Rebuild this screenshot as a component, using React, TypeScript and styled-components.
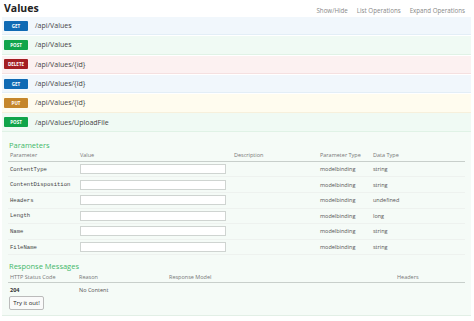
import React from "react";
import styled, { createGlobalStyle } from "styled-components";

const Global = createGlobalStyle`
  html, body { margin: 0; padding: 0; background: #fff; }
  body { font-family: "Open Sans", "Noto Sans", sans-serif; color: #333; }
`;

const Page = styled.div`
  width: 474px;
  height: 321px;
  overflow: hidden;
  padding: 0 3px 0 2px;
  box-sizing: border-box;
`;

const Header = styled.div`
  display: flex;
  justify-content: space-between;
  align-items: center;
  height: 17px;
  padding: 0 6px 0 2px;
`;

const Title = styled.h2`
  margin: 0;
  font-size: 10.5px;
  font-weight: 700;
  color: #222;
  line-height: 1;
`;

const Links = styled.div`
  display: flex;
  gap: 9px;
  font-size: 6.2px;
  color: #888;
  margin-top: 3px;
`;

const Ops = styled.div`
  display: flex;
  flex-direction: column;
  gap: 0.9px;
`;

const palette: Record<string, { badge: string; bg: string; line: string }> = {
  GET: { badge: "#0f6ab4", bg: "#f1f7fc", line: "#e3eef7" },
  POST: { badge: "#10a54a", bg: "#f0faf4", line: "#e0f2e6" },
  DELETE: { badge: "#a41e22", bg: "#fcf1f1", line: "#f5e0e0" },
  PUT: { badge: "#c5862b", bg: "#fffcef", line: "#f7f0dc" },
};

const OpRow = styled.div<{ $m: string }>`
  display: flex;
  align-items: center;
  height: 18.4px;
  padding-left: 2px;
  background: ${(p) => palette[p.$m].bg};
  border-bottom: 1px solid ${(p) => palette[p.$m].line};
  box-sizing: border-box;
`;

const Badge = styled.span<{ $m: string }>`
  width: 24px;
  height: 10px;
  display: flex;
  align-items: center;
  justify-content: center;
  background: ${(p) => palette[p.$m].badge};
  color: #fff;
  font-size: 4.5px;
  font-weight: 700;
  border-radius: 1px;
`;

const Path = styled.span`
  margin-left: 7px;
  font-size: 7px;
  color: #444;
`;

const Expanded = styled.div`
  background: #f5fbf7;
  border-bottom: 1px solid #e2efe6;
  padding: 8px 6px 5px 6px;
  height: 184px;
  box-sizing: border-box;
  font-size: 6px;
`;

const SectionTitle = styled.div`
  font-size: 7.5px;
  color: #43b86a;
  height: 10px;
  line-height: 10px;
  margin-left: 1px;
`;

const Grid = styled.div<{ $cols: string }>`
  display: grid;
  grid-template-columns: ${(p) => p.$cols};
  align-items: center;
`;

const HeadRow = styled(Grid)`
  height: 11px;
  border-bottom: 1px solid #c8cfcb;
  font-size: 5.5px;
  color: #777;
  padding-left: 2px;
`;

const ParamRow = styled(Grid)`
  height: 15.6px;
  border-bottom: 1px solid #eef2ef;
  font-size: 5.5px;
  color: #555;
  padding-left: 2px;
  box-sizing: border-box;
`;

const Mono = styled.span`
  font-family: "Liberation Mono", "DejaVu Sans Mono", monospace;
  font-size: 5.6px;
  color: #444;
`;

const Input = styled.div`
  width: 146px;
  height: 10px;
  background: #fff;
  border: 1px solid #cfd4d1;
  box-sizing: border-box;
`;

const Cell = styled.span`
  font-size: 5.5px;
  color: #555;
`;

const RespTitle = styled(SectionTitle)`
  margin-top: 6px;
`;

const DataRow = styled(Grid)`
  height: 13px;
  font-size: 5.5px;
  color: #555;
  padding-left: 2px;
`;

const Bold = styled.span`
  font-weight: 700;
  color: #333;
`;

const Button = styled.button`
  display: block;
  margin: 0 0 0 1px;
  width: 35px;
  height: 14px;
  font-family: "Open Sans", sans-serif;
  font-size: 6px;
  color: #222;
  background: #fafafa;
  border: 1px solid #bbb;
  border-radius: 2px;
  padding: 0;
`;

const ops: [string, string][] = [
  ["GET", "/api/Values"],
  ["POST", "/api/Values"],
  ["DELETE", "/api/Values/{id}"],
  ["GET", "/api/Values/{id}"],
  ["PUT", "/api/Values/{id}"],
  ["POST", "/api/Values/UploadFile"],
];

const params: [string, string][] = [
  ["ContentType", "string"],
  ["ContentDisposition", "string"],
  ["Headers", "undefined"],
  ["Length", "long"],
  ["Name", "string"],
  ["FileName", "string"],
];

const paramCols = "70px 154px 86px 53px 1fr";
const respCols = "69px 90px 228px 1fr";

export default function App() {
  return (
    <Page>
      <Global />
      <Header>
        <Title>Values</Title>
        <Links>
          <span>Show/Hide</span>
          <span>List Operations</span>
          <span>Expand Operations</span>
        </Links>
      </Header>
      <Ops>
        {ops.map(([m, p], i) => (
          <OpRow key={i} $m={m}>
            <Badge $m={m}>{m}</Badge>
            <Path>{p}</Path>
          </OpRow>
        ))}
      </Ops>
      <Expanded>
        <SectionTitle>Parameters</SectionTitle>
        <HeadRow $cols={paramCols}>
          <span>Parameter</span>
          <span>Value</span>
          <span>Description</span>
          <span>Parameter Type</span>
          <span>Data Type</span>
        </HeadRow>
        {params.map(([n, t]) => (
          <ParamRow key={n} $cols={paramCols}>
            <Mono>{n}</Mono>
            <Input />
            <span />
            <Cell>modelbinding</Cell>
            <Cell>{t}</Cell>
          </ParamRow>
        ))}
        <RespTitle>Response Messages</RespTitle>
        <HeadRow $cols={respCols}>
          <span>HTTP Status Code</span>
          <span>Reason</span>
          <span>Response Model</span>
          <span>Headers</span>
        </HeadRow>
        <DataRow $cols={respCols}>
          <Bold>204</Bold>
          <span>No Content</span>
          <span />
          <span />
        </DataRow>
        <Button>Try it out!</Button>
      </Expanded>
    </Page>
  );
}
